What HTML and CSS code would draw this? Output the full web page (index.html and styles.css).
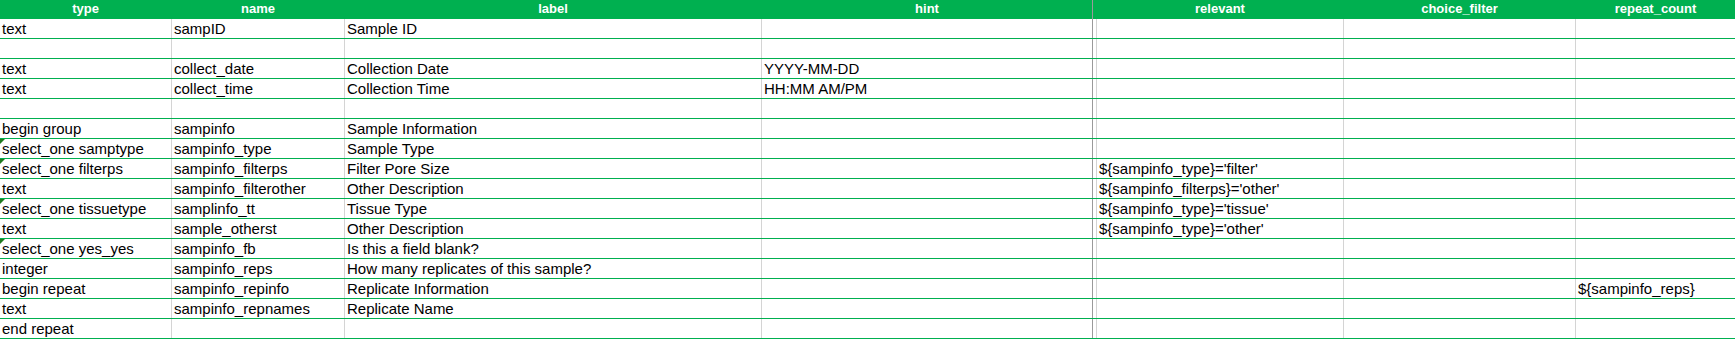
FILE: index.html
```html
<!DOCTYPE html>
<html>
<head>
<meta charset="utf-8">
<title>survey</title>
<link rel="stylesheet" href="styles.css">
</head>
<body>
<div class="sheet">
  <div class="row head">
    <div class="cell">type</div><div class="cell">name</div><div class="cell">label</div><div class="cell hint">hint</div><div class="cell gap"></div><div class="cell">relevant</div><div class="cell">choice_filter</div><div class="cell last">repeat_count</div>
  </div>
  <div class="row">
    <div class="cell">text</div><div class="cell">sampID</div><div class="cell">Sample ID</div><div class="cell hint"></div><div class="cell gap"></div><div class="cell"></div><div class="cell"></div><div class="cell last"></div>
  </div>
  <div class="row">
    <div class="cell"></div><div class="cell"></div><div class="cell"></div><div class="cell hint"></div><div class="cell gap"></div><div class="cell"></div><div class="cell"></div><div class="cell last"></div>
  </div>
  <div class="row">
    <div class="cell">text</div><div class="cell">collect_date</div><div class="cell">Collection Date</div><div class="cell hint">YYYY-MM-DD</div><div class="cell gap"></div><div class="cell"></div><div class="cell"></div><div class="cell last"></div>
  </div>
  <div class="row">
    <div class="cell">text</div><div class="cell">collect_time</div><div class="cell">Collection Time</div><div class="cell hint">HH:MM AM/PM</div><div class="cell gap"></div><div class="cell"></div><div class="cell"></div><div class="cell last"></div>
  </div>
  <div class="row">
    <div class="cell"></div><div class="cell"></div><div class="cell"></div><div class="cell hint"></div><div class="cell gap"></div><div class="cell"></div><div class="cell"></div><div class="cell last"></div>
  </div>
  <div class="row">
    <div class="cell">begin group</div><div class="cell">sampinfo</div><div class="cell">Sample Information</div><div class="cell hint"></div><div class="cell gap"></div><div class="cell"></div><div class="cell"></div><div class="cell last"></div>
  </div>
  <div class="row">
    <div class="cell flag">select_one samptype</div><div class="cell">sampinfo_type</div><div class="cell">Sample Type</div><div class="cell hint"></div><div class="cell gap"></div><div class="cell"></div><div class="cell"></div><div class="cell last"></div>
  </div>
  <div class="row">
    <div class="cell flag">select_one filterps</div><div class="cell">sampinfo_filterps</div><div class="cell">Filter Pore Size</div><div class="cell hint"></div><div class="cell gap"></div><div class="cell">${sampinfo_type}='filter'</div><div class="cell"></div><div class="cell last"></div>
  </div>
  <div class="row">
    <div class="cell">text</div><div class="cell">sampinfo_filterother</div><div class="cell">Other Description</div><div class="cell hint"></div><div class="cell gap"></div><div class="cell">${sampinfo_filterps}='other'</div><div class="cell"></div><div class="cell last"></div>
  </div>
  <div class="row">
    <div class="cell flag">select_one tissuetype</div><div class="cell">samplinfo_tt</div><div class="cell">Tissue Type</div><div class="cell hint"></div><div class="cell gap"></div><div class="cell">${sampinfo_type}='tissue'</div><div class="cell"></div><div class="cell last"></div>
  </div>
  <div class="row">
    <div class="cell">text</div><div class="cell">sample_otherst</div><div class="cell">Other Description</div><div class="cell hint"></div><div class="cell gap"></div><div class="cell">${sampinfo_type}='other'</div><div class="cell"></div><div class="cell last"></div>
  </div>
  <div class="row">
    <div class="cell flag">select_one yes_yes</div><div class="cell">sampinfo_fb</div><div class="cell">Is this a field blank?</div><div class="cell hint"></div><div class="cell gap"></div><div class="cell"></div><div class="cell"></div><div class="cell last"></div>
  </div>
  <div class="row">
    <div class="cell">integer</div><div class="cell">sampinfo_reps</div><div class="cell">How many replicates of this sample?</div><div class="cell hint"></div><div class="cell gap"></div><div class="cell"></div><div class="cell"></div><div class="cell last"></div>
  </div>
  <div class="row">
    <div class="cell">begin repeat</div><div class="cell">sampinfo_repinfo</div><div class="cell">Replicate Information</div><div class="cell hint"></div><div class="cell gap"></div><div class="cell"></div><div class="cell"></div><div class="cell last">${sampinfo_reps}</div>
  </div>
  <div class="row">
    <div class="cell">text</div><div class="cell">sampinfo_repnames</div><div class="cell">Replicate Name</div><div class="cell hint"></div><div class="cell gap"></div><div class="cell"></div><div class="cell"></div><div class="cell last"></div>
  </div>
  <div class="row">
    <div class="cell">end repeat</div><div class="cell"></div><div class="cell"></div><div class="cell hint"></div><div class="cell gap"></div><div class="cell"></div><div class="cell"></div><div class="cell last"></div>
  </div>
</div>
</body>
</html>
```
FILE: styles.css
```css
html, body {
  margin: 0;
  padding: 0;
  background: #ffffff;
}

.sheet {
  display: flex;
  flex-direction: column;
  width: 1735px;
  font-family: "Liberation Sans", Arial, sans-serif;
  color: #000000;
}

.row {
  display: grid;
  grid-template-columns: 172px 173px 417px 331px 4px 247px 232px 159px;
  height: 20px;
  box-sizing: border-box;
  border-bottom: 1px solid #00b050;
}

.cell {
  box-sizing: border-box;
  position: relative;
  border-right: 1px solid #d4d4d4;
  padding-left: 2px;
  font-size: 15px;
  line-height: 19px;
  white-space: nowrap;
}

.cell.gap {
  padding: 0;
}

.cell.hint {
  border-right-color: #9a9a9a;
}

.cell.last {
  border-right: none;
}

.head {
  height: 19px;
  background: #00b050;
  border-bottom: none;
}

.head .cell {
  border-right-color: transparent;
  padding: 0 0 2px 0;
  text-align: center;
  color: #ffffff;
  font-weight: bold;
  font-size: 13px;
  line-height: 17px;
}

.head .cell.hint {
  border-right-color: #9a9a9a;
}

.flag::before {
  content: "";
  position: absolute;
  top: 0;
  left: 0;
  width: 0;
  height: 0;
  border-top: 5px solid #1e7b1e;
  border-right: 5px solid transparent;
}
```
